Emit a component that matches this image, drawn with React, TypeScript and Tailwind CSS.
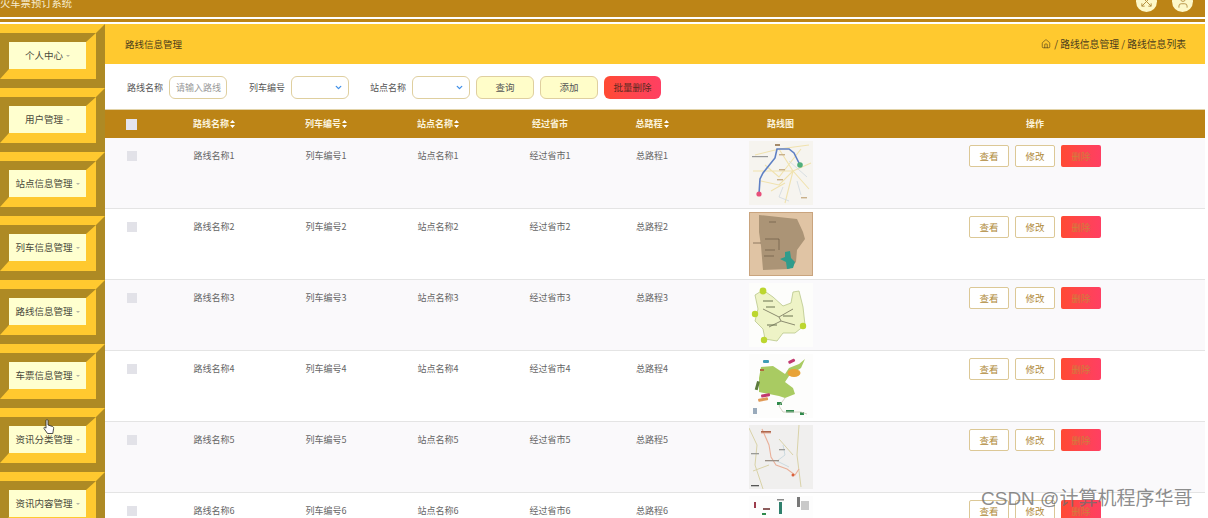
import React from "react"
import { Home, User, ChevronDown } from "lucide-react"

const menus = ["个人中心", "用户管理", "站点信息管理", "列车信息管理", "路线信息管理", "车票信息管理", "资讯分类管理", "资讯内容管理"]

const Map1 = () => (
  <svg viewBox="0 0 64 64" className="w-16 h-16 blur-[0.6px]">
    <rect width="64" height="64" fill="#f6f4ef" />
    <path d="M30 8 L44 30 L62 22 M44 30 L36 62 M20 30 L44 30 L60 48 M6 14 L30 8 L60 4 M44 30 L30 44 L12 40 M16 24 L30 36 L52 8 M4 30 L20 30 M22 50 L36 42" stroke="#f0e2ae" strokeWidth="1.1" fill="none" />
    <path d="M34 46 L30 56 L40 60 M48 40 L52 54 M40 20 L58 36" stroke="#cfd8de" strokeWidth="0.8" fill="none" />
    <path d="M10 53 L11 38 L14 32 L26 17 L28 8 L40 8 L45 12 L51 24" stroke="#5f80c4" strokeWidth="1.6" fill="none" />
    <circle cx="10" cy="53" r="2.6" fill="#e8507a" />
    <circle cx="51" cy="24" r="2.8" fill="#4fae7c" />
    <rect x="3" y="15" width="16" height="1.2" fill="#999" />
    <rect x="26" y="3" width="5" height="2" fill="#a58a6a" />
    <rect x="30" y="13" width="6" height="1.4" fill="#c9b08a" />
    <rect x="30" y="28" width="6" height="1.4" fill="#c9b08a" />
    <rect x="28" y="38" width="6" height="1.4" fill="#c9b08a" />
    <rect x="52" y="56" width="6" height="1.4" fill="#c9b08a" />
  </svg>
)

const Map2 = () => (
  <svg viewBox="0 0 64 64" className="w-16 h-16 blur-[0.6px]">
    <rect width="64" height="64" fill="#e0c4a4" />
    <rect x="0.5" y="0.5" width="63" height="63" fill="none" stroke="#c9a47e" />
    <path d="M10 3 L48 7 L54 20 L56 27 L48 38 L47 50 L40 57 L14 58 L12 34 L10 20 Z" fill="#ab9476" />
    <path d="M36 40 L41 39 L42 46 L46 50 L44 56 L38 57 L37 50 L31 47 L36 45 Z" fill="#2f9c8c" />
    <path d="M20 10 H27 M16 27 H30 M16 38 H26 M15 44 H25 M4 31 H12 M30 27 V38" stroke="#6b5a45" strokeWidth="0.7" fill="none" />
  </svg>
)

const Map3 = () => (
  <svg viewBox="0 0 64 64" className="w-16 h-16 blur-[0.6px]">
    <rect width="64" height="64" fill="#fdfdfb" />
    <path d="M6 12 L14 7 L24 14 L34 23 L42 20 L44 9 L50 8 L54 24 L56 42 L46 50 L34 50 L28 58 L16 56 L14 46 L6 38 L9 26 Z" fill="#eef3c6" stroke="#b9c78a" strokeWidth="0.8" />
    <path d="M14 26 L30 34 L44 26 M20 44 L32 38 L46 42 M30 34 L32 38" stroke="#8c8c70" strokeWidth="1" fill="none" />
    <path d="M14 18 H24 M17 24 H26 M34 33 H44 M18 42 H28" stroke="#6b7250" strokeWidth="1" />
    <circle cx="14" cy="8" r="3.4" fill="#bcd62f" />
    <circle cx="6" cy="31" r="3.2" fill="#bcd62f" />
    <circle cx="54" cy="43" r="3.2" fill="#bcd62f" />
    <circle cx="15" cy="57" r="3.2" fill="#bcd62f" />
  </svg>
)

const Map4 = () => (
  <svg viewBox="0 0 64 64" className="w-16 h-16 blur-[0.6px]">
    <rect width="64" height="64" fill="#fdfdfc" />
    <path d="M12 13 L24 12 L36 20 L40 14 L50 10 L56 5 L52 14 L40 22 L36 28 L44 34 L46 40 L36 44 L30 42 L20 40 L10 38 L10 24 Z" fill="#a9cb62" />
    <ellipse cx="45" cy="19" rx="6.5" ry="4" fill="#e8a339" />
    <rect x="14" y="6" width="6" height="3" rx="1" fill="#3f9cb5" />
    <rect x="39" y="6" width="7" height="3" rx="1" fill="#c23a70" transform="rotate(-25 42 7)" />
    <rect x="11" y="15" width="4" height="2" fill="#b06a3c" />
    <rect x="7" y="27" width="3" height="9" fill="#5c7a3c" transform="rotate(15 8 31)" />
    <rect x="12" y="40" width="9" height="3" rx="1" fill="#c23a70" transform="rotate(-10 16 41)" />
    <rect x="9" y="44" width="10" height="3" rx="1" fill="#e09a56" transform="rotate(-10 14 45)" />
    <rect x="28" y="48" width="5" height="3" fill="#2f8a4c" />
    <rect x="37" y="56" width="8" height="2.5" fill="#2f8a4c" />
    <rect x="51" y="58" width="4" height="3" fill="#2f8a4c" />
    <path d="M36 44 L30 52 L34 58 L52 58 L58 60" stroke="#c9c9b8" strokeWidth="0.8" fill="none" />
    <rect x="4" y="54" width="4" height="6" fill="#9ab" />
  </svg>
)

const Map5 = () => (
  <svg viewBox="0 0 64 64" className="w-16 h-16 blur-[0.6px]">
    <rect width="64" height="64" fill="#f0efee" />
    <path d="M0 3 L8 20 L6 40 L14 64 M50 0 L48 30 L52 62 M20 40 L4 46 M30 14 L44 30" stroke="#d9d2a8" strokeWidth="1" fill="none" />
    <path d="M34 20 L36 30 L28 36 L40 42" stroke="#c3d4dc" strokeWidth="0.8" fill="none" />
    <path d="M13 4 L20 20 L22 32 L27 40 L38 44 L46 50 L50 44 M12 8 H22" stroke="#e9b09a" strokeWidth="1.1" fill="none" />
    <circle cx="44" cy="50" r="1.5" fill="#d9603c" />
    <rect x="12" y="6" width="10" height="1.6" fill="#b0664c" />
    <rect x="16" y="35" width="14" height="1.3" fill="#9a8f86" />
    <rect x="2" y="28" width="8" height="1.3" fill="#9a9a96" />
    <rect x="30" y="24" width="6" height="1.3" fill="#9a9a96" />
    <rect x="2" y="60" width="8" height="1.3" fill="#555" />
  </svg>
)

const Map6 = () => (
  <svg viewBox="0 0 64 64" className="w-16 h-16 blur-[0.6px]">
    <rect width="64" height="64" fill="#fdfdfd" />
    <rect x="5" y="6" width="2" height="6" fill="#9c3c4c" />
    <rect x="30" y="6" width="3" height="12" fill="#2f7f6c" />
    <rect x="14" y="12" width="7" height="2" fill="#8c5c5c" />
    <rect x="28" y="3" width="7" height="1.5" fill="#8a8a8a" />
    <rect x="48" y="1" width="3" height="10" fill="#777" />
    <rect x="52" y="5" width="8" height="9" fill="#c9c9c9" />
    <rect x="13" y="17" width="4" height="2" fill="#2f8a4c" />
  </svg>
)

const maps = [Map1, Map2, Map3, Map4, Map5, Map6]

const SortCaret = () => (
  <svg viewBox="0 0 5 8" className="w-[5px] h-2 ml-px shrink-0" fill="#fff">
    <path d="M2.5 0 L5 3 H0 Z M2.5 8 L5 5 H0 Z" />
  </svg>
)

const Select = () => (
  <div className="w-[58px] h-[23px] rounded-[6px] border border-[#dfcf9f] bg-white flex items-center justify-end pr-[5px]">
    <ChevronDown className="w-[9px] h-[9px] text-[#3f8fe8]" strokeWidth={3.5} />
  </div>
)

const columns = "grid grid-cols-[53px_112px_112px_112px_112px_92px_165px_340px]"

export default function App() {
  return (
    <div className="w-[1208px] h-[518px] overflow-hidden bg-white font-['Noto_Sans_CJK_SC','Noto_Sans',sans-serif] relative">
      <div className="w-[1205px]">
        {/* Top bar */}
        <div className="h-[17px] bg-[#bc8416] flex items-start justify-between overflow-hidden">
          <span className="text-[10.3px] leading-[14px] -mt-[4px] text-[#f6ecd0]">火车票预订系统</span>
          <div className="flex gap-[15px] pr-[12px] -mt-[9px]">
            <div className="w-[21px] h-[21px] rounded-full bg-[#fdf8c8] flex items-center justify-center">
              <svg viewBox="0 0 14 14" className="w-[13px] h-[13px]" stroke="#b08a3a" strokeWidth="1" fill="none">
                <path d="M2 2 L12 12 M12 2 L2 12 M2 9 V12 H5 M12 9 V12 H9" />
              </svg>
            </div>
            <div className="w-[21px] h-[21px] rounded-full bg-[#fdf8c8] flex items-center justify-center">
              <User className="w-[14px] h-[14px] text-[#b08a3a]" strokeWidth={1.5} />
            </div>
          </div>
        </div>
        <div className="h-[2px] bg-white" />
        <div className="h-[3px] bg-[#bc8416]" />
        <div className="h-[2px] bg-white" />

        <div className="flex">
          {/* Sidebar */}
          <div className="w-[105px] shrink-0 flex flex-col">
            {menus.map((m) => (
              <div key={m} className="h-[64px] shrink-0 border-t-[9px] border-r-[9px] border-b-[9px] border-t-[#ffc92f] border-r-[#ae8a24] border-b-[#ae8a24] border-solid">
                <div className="h-[46px] border-t-[9px] border-l-[9px] border-r-[10px] border-b-[10px] border-t-[#ae8a24] border-l-[#ae8a24] border-r-[#ffc92f] border-b-[#ffc92f] border-solid">
                  <div className="h-[27px] bg-[#ffffcf] flex items-center justify-center text-[9.5px] text-[#4a4a3c]">
                    {m}
                    <span className="ml-[3px] w-0 h-0 border-l-[2.5px] border-r-[2.5px] border-t-[2.5px] border-l-transparent border-r-transparent border-t-[#b5b5a5]" />
                  </div>
                </div>
              </div>
            ))}
          </div>

          {/* Main */}
          <div className="flex-1 min-w-0">
            <div className="h-[40px] bg-[#ffc92f] flex items-center justify-between pl-[20px] pr-[19px] text-[9.5px] text-[#4a3c1c]">
              <span>路线信息管理</span>
              <div className="flex items-center gap-[3px] text-[9.8px]">
                <Home className="w-[10px] h-[10px]" strokeWidth={1.5} />
                <span>/ 路线信息管理 / 路线信息列表</span>
              </div>
            </div>

            {/* Search toolbar */}
            <div className="h-[45px] pl-[22px] pt-[2px] flex items-center text-[9px] text-[#555]">
              <span className="w-[36px] mr-[6px] whitespace-nowrap">路线名称</span>
              <div className="w-[58px] h-[23px] rounded-[6px] border border-[#dfcf9f] flex items-center pl-[6px] text-[#999] overflow-hidden whitespace-nowrap mr-[22px]">请输入路线</div>
              <span className="w-[36px] mr-[6px] whitespace-nowrap">列车编号</span>
              <Select />
              <span className="w-[36px] ml-[21px] mr-[6px] whitespace-nowrap">站点名称</span>
              <Select />
              <button className="w-[58px] h-[23px] ml-[6px] rounded-[6px] border border-[#dfcf9f] bg-[#fffdc9] text-[#555] text-[9.5px]">查询</button>
              <button className="w-[58px] h-[23px] ml-[6px] rounded-[6px] border border-[#dfcf9f] bg-[#fffdc9] text-[#555] text-[9.5px]">添加</button>
              <button className="w-[57px] h-[23px] ml-[6px] rounded-[6px] bg-linear-to-r from-[#ff4a32] to-[#ff3f62] text-[#5c2a20] text-[9.5px]">批量删除</button>
            </div>

            {/* Table header */}
            <div className={`${columns} h-[29px] bg-[#bc8416] border-t border-[#e2d3a8] items-center text-[9px] font-bold text-[#fbf3dc]`}>
              <div className="pl-[21px]"><div className="w-[11px] h-[11px] bg-[#e4e4ee]" /></div>
              {["路线名称", "列车编号", "站点名称"].map((h) => (
                <div key={h} className="flex items-center justify-center">{h}<SortCaret /></div>
              ))}
              <div className="text-center">经过省市</div>
              <div className="flex items-center justify-center">总路程<SortCaret /></div>
              <div className="text-center">路线图</div>
              <div className="text-center pl-[4px]">操作</div>
            </div>

            {/* Rows */}
            {maps.map((MapImage, i) => (
              <div key={i} className={`${columns} h-[71px] border-b border-[#e4e4e4] text-[9px] text-[#666] ${i % 2 === 0 ? "bg-[#faf9fb]" : "bg-white"}`}>
                <div className="pl-[22px] pt-[13px]"><div className="w-[10px] h-[10px] bg-[#e2e2e8]" /></div>
                <div className="text-center pt-[11px] leading-[14px]">路线名称{i + 1}</div>
                <div className="text-center pt-[11px] leading-[14px]">列车编号{i + 1}</div>
                <div className="text-center pt-[11px] leading-[14px]">站点名称{i + 1}</div>
                <div className="text-center pt-[11px] leading-[14px]">经过省市{i + 1}</div>
                <div className="text-center pt-[11px] leading-[14px]">总路程{i + 1}</div>
                <div className="flex justify-center pt-[3px]"><MapImage /></div>
                <div className="flex justify-center gap-[6px] pt-[7px] pl-[4px]">
                  <button className="w-[40px] h-[22px] rounded-[2px] border border-[#dcc896] bg-white text-[#b08a3a] text-[9.5px]">查看</button>
                  <button className="w-[40px] h-[22px] rounded-[2px] border border-[#dcc896] bg-white text-[#b08a3a] text-[9.5px]">修改</button>
                  <button className="w-[40px] h-[22px] rounded-[2px] bg-linear-to-r from-[#ff4a32] to-[#ff3f62] text-[#cf7f3c] text-[9.5px]">删除</button>
                </div>
              </div>
            ))}
          </div>
        </div>
      </div>

      {/* Mouse pointer */}
      <svg viewBox="0 0 12 16" className="absolute left-[43px] top-[419px] w-[12px] h-[16px]">
        <path d="M3 1.5 C3 0.5 5 0.5 5 1.5 V6 L9.5 7.5 C10.5 8 10.8 8.6 10.6 9.6 L9.8 14.5 H4.5 L1 9.5 C0.6 8.5 1.6 8 2.4 8.6 L3 9.2 Z" fill="#fff" stroke="#222" strokeWidth="0.8" />
      </svg>

      {/* CSDN watermark */}
      <div className="absolute left-[981px] top-[487px] text-[19px] leading-[24px] text-[#6f6f6f]/80 whitespace-nowrap font-['Liberation_Sans','Noto_Sans_CJK_SC',sans-serif]">
        CSDN @计算机程序华哥
      </div>
    </div>
  )
}
